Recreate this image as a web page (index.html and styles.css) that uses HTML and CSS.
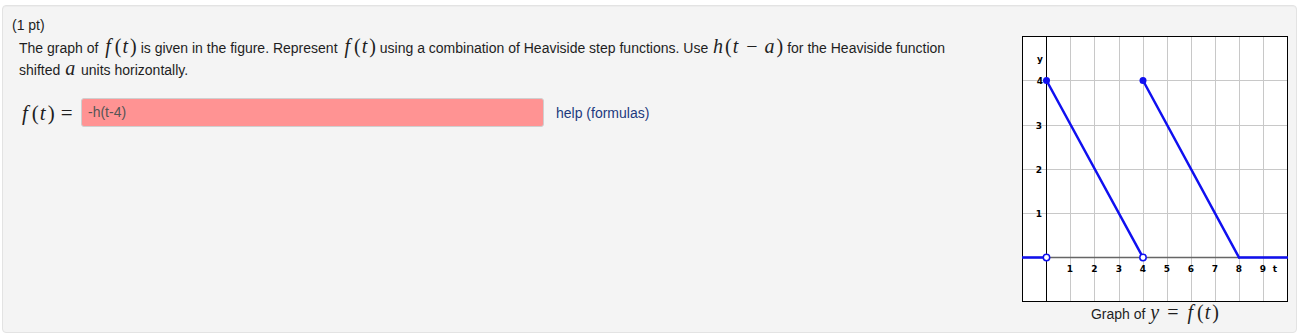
FILE: index.html
```html
<!DOCTYPE html>
<html>
<head>
<meta charset="utf-8">
<link rel="stylesheet" href="styles.css">
</head>
<body>
<div class="well">
  <div class="problem">
    <div class="pts">(1 pt)</div>
    <p class="text">The graph of <span class="m"><i class="f">f</i>(<i>t</i>)</span> is given in the figure. Represent <span class="m"><i class="f">f</i>(<i>t</i>)</span> using a combination of Heaviside step functions. Use <span class="m"><i>h</i>(<i>t</i><span class="op">−</span><i>a</i>)</span> for the Heaviside function<br>shifted <span class="m"><i>a</i></span> units horizontally.</p>
    <div class="answer">
      <span class="m lhs"><i class="f">f</i>(<i>t</i>)<span class="op">=</span></span>
      <div class="input incorrect">-h(t-4)</div>
      <a class="help">help (formulas)</a>
    </div>
  </div>
  <figure class="fig">
    <svg class="graph" width="266" height="266" viewBox="0 0 266 266" xmlns="http://www.w3.org/2000/svg">
      <rect x="0" y="0" width="266" height="266" fill="#fff"/>
      <g stroke="#c8c8c8" stroke-width="1">
        <line x1="48.5" y1="0" x2="48.5" y2="266"/>
        <line x1="72.5" y1="0" x2="72.5" y2="266"/>
        <line x1="97.5" y1="0" x2="97.5" y2="266"/>
        <line x1="121.5" y1="0" x2="121.5" y2="266"/>
        <line x1="145.5" y1="0" x2="145.5" y2="266"/>
        <line x1="169.5" y1="0" x2="169.5" y2="266"/>
        <line x1="193.5" y1="0" x2="193.5" y2="266"/>
        <line x1="217.5" y1="0" x2="217.5" y2="266"/>
        <line x1="241.5" y1="0" x2="241.5" y2="266"/>
        <line x1="0" y1="44.5" x2="266" y2="44.5"/>
        <line x1="0" y1="89.5" x2="266" y2="89.5"/>
        <line x1="0" y1="133.5" x2="266" y2="133.5"/>
        <line x1="0" y1="177.5" x2="266" y2="177.5"/>
      </g>
      <line x1="0" y1="221.5" x2="266" y2="221.5" stroke="#666" stroke-width="1.5"/>
      <line x1="24.5" y1="0" x2="24.5" y2="266" stroke="#000" stroke-width="1"/>
      <rect x="0.5" y="0.5" width="265" height="265" fill="none" stroke="#000" stroke-width="1"/>
      <g fill="#000" font-family="'DejaVu Sans', sans-serif" font-weight="bold" font-size="9" text-anchor="middle">
        <text x="18" y="26">y</text>
        <text x="18" y="47.5">4</text>
        <text x="17" y="92.5">3</text>
        <text x="17" y="136.5">2</text>
        <text x="17" y="180.5">1</text>
        <text x="48" y="236">1</text>
        <text x="72.5" y="236">2</text>
        <text x="97" y="236">3</text>
        <text x="121" y="236">4</text>
        <text x="145" y="236">5</text>
        <text x="169" y="236">6</text>
        <text x="193" y="236">7</text>
        <text x="217" y="236">8</text>
        <text x="241" y="236">9</text>
        <text x="253" y="236">t</text>
      </g>
      <g stroke="#1010f0" stroke-width="2.5" fill="none" stroke-linecap="round">
        <line x1="0" y1="221.5" x2="24.5" y2="221.5"/>
        <line x1="24.5" y1="44.5" x2="121" y2="221.5"/>
        <line x1="121" y1="44.5" x2="217" y2="221.5"/>
        <line x1="217" y1="221.5" x2="266" y2="221.5"/>
      </g>
      <g fill="#1010f0">
        <circle cx="24.5" cy="44.5" r="3.5"/>
        <circle cx="121" cy="44.5" r="3.5"/>
      </g>
      <g fill="#fff" stroke="#1010f0" stroke-width="1.5">
        <circle cx="24.5" cy="221.5" r="3.2"/>
        <circle cx="121" cy="221.5" r="3.2"/>
      </g>
    </svg>
    <figcaption class="caption">Graph of <span class="m"><i>y</i><span class="op">=</span><i class="f">f</i>(<i>t</i>)</span></figcaption>
  </figure>
</div>
</body>
</html>
```
FILE: styles.css
```css
html, body {
  margin: 0;
  padding: 0;
  background: #fff;
}
body {
  font-family: "Liberation Sans", Arial, sans-serif;
  font-size: 14px;
  color: #1e1e1e;
}
.well {
  margin: 5px 4px 2px 2px;
  height: 328px;
  box-sizing: border-box;
  background: #f4f4f4;
  border: 1px solid #e3e3e3;
  border-radius: 4px;
  display: flex;
  box-shadow: inset 0 1px 1px rgba(0,0,0,0.03);
}
.problem {
  flex: 1;
  padding: 9px 0 0 9px;
}
.pts {
  line-height: 20px;
}
.text {
  margin: 2px 0 0 7px;
  line-height: 21px;
  width: 965px;
}
.m {
  display: inline-block;
  font-family: "Liberation Serif", "Times New Roman", serif;
  font-size: 20px;
  line-height: 18px;
  white-space: nowrap;
}
.m i {
  font-style: italic;
  margin: 0 2px 0 1px;
}
.m i.f {
  margin: 0 4px 0 3px;
}
.m .op {
  margin: 0 6px;
}
.answer {
  display: flex;
  align-items: center;
  margin: 17px 0 0 7px;
}
.lhs {
  width: 62px;
  font-size: 21px;
}
.input {
  width: 463px;
  height: 29px;
  box-sizing: border-box;
  border: 1px solid #cfcfcf;
  border-radius: 3px;
  padding: 0 6px;
  line-height: 27px;
  color: #555;
  font-size: 14px;
}
.incorrect {
  background: #ff9393;
}
.help {
  margin-left: 12px;
  color: #1c3a7e;
  text-decoration: none;
}
.fig {
  margin: 30px 8px 0 0;
  width: 266px;
}
.graph {
  display: block;
}
.caption {
  text-align: center;
  margin-top: 1px;
  line-height: 22px;
  color: #1e1e1e;
}
.caption .m {
  font-size: 20px;
}
```
